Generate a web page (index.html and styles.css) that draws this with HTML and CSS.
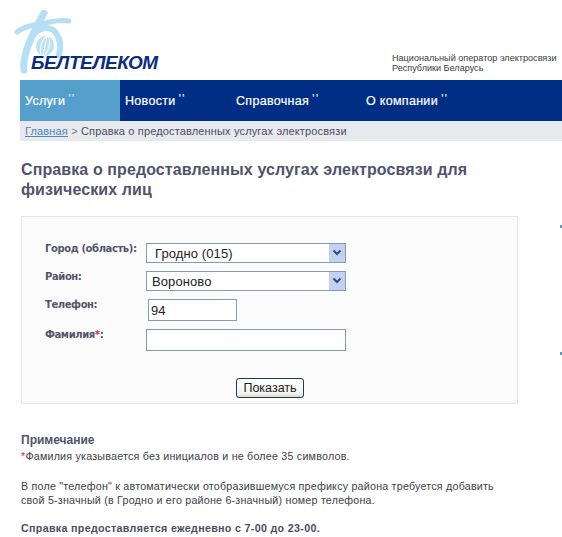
FILE: index.html
```html
<!DOCTYPE html>
<html lang="ru">
<head>
<meta charset="utf-8">
<title>Справка о предоставленных услугах электросвязи</title>
<link rel="stylesheet" href="styles.css">
</head>
<body>
<header class="top">
  <div class="logo">
    <svg class="logo-mark" width="64" height="66" viewBox="0 0 64 66" aria-hidden="true">
      <g fill="none" stroke="#b4dff4" stroke-linecap="round">
        <path d="M3 22C12 15 26 14 36 12C44 10.500 50 10 55 11" stroke-width="5"/>
        <path d="M30 3C24 14 16 28 12 42C10 50 9 55 10 60" stroke-width="7"/>
        <path d="M18 27C24 17 36 15 42 23C47 30 47 38 45 45" stroke-width="6"/>
      </g>
      <ellipse cx="31" cy="36" rx="9" ry="10" fill="#bce2f5" transform="rotate(15 31 36)"/>
      <g fill="none" stroke="#fff" stroke-width="1">
        <ellipse cx="31" cy="36" rx="4" ry="10" transform="rotate(15 31 36)"/>
        <path d="M33 26L29 46"/>
      </g>
    </svg>
    <span class="logo-text">БЕЛТЕЛЕКОМ</span>
  </div>
  <p class="tagline">Национальный оператор электросвязи<br>Республики Беларусь</p>
</header>

<nav class="nav">
  <a class="nav-item nav-active w-a" href="#">Услуги<i class="dots">''</i></a>
  <a class="nav-item w-b" href="#">Новости<i class="dots">''</i></a>
  <a class="nav-item w-c" href="#">Справочная<i class="dots">''</i></a>
  <a class="nav-item w-d" href="#">О компании<i class="dots">''</i></a>
</nav>

<div class="crumbs"><a href="#">Главная</a> <span class="sep">&gt;</span> Справка о предоставленных услугах электросвязи</div>

<div class="layout">
  <main class="main">
    <h1>Справка о предоставленных услугах электросвязи для физических лиц</h1>
    <form class="panel">
      <div class="row row-a">
        <label class="lbl">Город (область):</label>
        <div class="sel">
          <select class="sel-in indent"><option>Гродно (015)</option></select>
          <span class="sel-btn"><svg width="10" height="8" viewBox="0 0 10 8"><path d="M1.500 1.500L5 5L8.500 1.500" fill="none" stroke="#2b4a8c" stroke-width="2"/></svg></span>
        </div>
      </div>
      <div class="row row-b">
        <label class="lbl">Район:</label>
        <div class="sel">
          <select class="sel-in"><option>Вороново</option></select>
          <span class="sel-btn"><svg width="10" height="8" viewBox="0 0 10 8"><path d="M1.500 1.500L5 5L8.500 1.500" fill="none" stroke="#2b4a8c" stroke-width="2"/></svg></span>
        </div>
      </div>
      <div class="row row-c">
        <label class="lbl">Телефон:</label>
        <input class="field field-tel" type="text" value="94">
      </div>
      <div class="row row-d">
        <label class="lbl">Фамилия<span class="req">*</span>:</label>
        <input class="field field-name" type="text">
      </div>
      <div class="actions"><button class="btn" type="button">Показать</button></div>
    </form>
    <section class="notes">
      <h2>Примечание</h2>
      <p class="note-first"><span class="req">*</span>Фамилия указывается без инициалов и не более 35 символов.</p>
      <p class="note-two">В поле "телефон" к автоматически отобразившемуся префиксу района требуется добавить свой 5-значный (в Гродно и его районе 6-значный) номер телефона.</p>
      <p class="note-bold">Справка предоставляется ежедневно с 7-00 до 23-00.</p>
    </section>
  </main>
  <aside class="side"><span class="mark"></span><span class="mark"></span></aside>
</div>
</body>
</html>
```
FILE: styles.css
```css
html, body {
  margin: 0;
  padding: 0;
  height: 537px;
  overflow: hidden;
  background: #fff;
}
body {
  font-family: "Liberation Sans", Arial, sans-serif;
  color: #4a4d63;
}
.top {
  height: 80px;
  display: flex;
  justify-content: space-between;
  box-sizing: border-box;
}
.logo {
  position: relative;
  width: 170px;
}
.logo-mark {
  position: absolute;
  left: 14px;
  top: 10px;
}
.logo-text {
  position: absolute;
  left: 31px;
  top: 52px;
  font-size: 19px;
  line-height: 22px;
  font-weight: bold;
  font-style: italic;
  color: #0b2d7c;
  letter-spacing: -0.500px;
}
.tagline {
  margin: 53px 5px 0 0;
  width: 165px;
  font-size: 9.100px;
  line-height: 10px;
  color: #3a3a3a;
  white-space: nowrap;
}
.nav {
  margin-left: 20px;
  height: 41px;
  background: #002e85;
  display: flex;
}
.nav-item {
  box-sizing: border-box;
  padding: 11px 0 0 5px;
  font-size: 12.500px;
  line-height: 15px;
  font-weight: 500;
  color: #fff;
  text-decoration: none;
  letter-spacing: 0.300px;
  -webkit-text-stroke: 0.2px #fff;
}
.nav-active { background: #559fcd; }
.w-a { width: 100px; }
.w-b { width: 111px; }
.w-c { width: 130px; }
.w-d { width: 150px; }
.dots {
  font-style: normal;
  font-weight: bold;
  font-size: 11px;
  letter-spacing: 1px;
  color: #b5dcf4;
  margin-left: 3px;
  vertical-align: 3px;
  -webkit-text-stroke: 0;
}
.crumbs {
  margin-left: 20px;
  height: 20px;
  box-sizing: border-box;
  padding: 4px 0 0 5px;
  background: #e8e9ee;
  font-size: 11px;
  line-height: 13px;
  letter-spacing: 0.150px;
  color: #4a4d5a;
}
.crumbs a { color: #4a88b5; }
.sep { color: #777; }
.layout {
  display: flex;
  justify-content: space-between;
}
.main {
  width: 497px;
  margin-left: 21px;
}
h1 {
  margin: 19px 0 16px;
  font-size: 16px;
  line-height: 20px;
  font-weight: bold;
  color: #50536c;
  letter-spacing: 0.100px;
}
.panel {
  box-sizing: border-box;
  height: 188px;
  border: 1px solid #e6e6e6;
  background: #fbfbfb;
  padding: 26px 0 0 23px;
}
.row {
  display: grid;
  grid-template-columns: 101px 200px;
  align-items: start;
}
.row-a { height: 28px; }
.row-b { height: 28px; }
.row-c { height: 30px; }
.row-d { height: 49px; }
.lbl {
  font-family: "DejaVu Sans", Verdana, sans-serif;
  font-size: 10px;
  line-height: 12px;
  font-weight: bold;
  letter-spacing: -0.400px;
  color: #52556b;
  white-space: nowrap;
}
.req { color: #d81e50; }
.sel {
  position: relative;
  width: 200px;
  height: 20px;
}
.sel-in {
  appearance: none;
  -webkit-appearance: none;
  box-sizing: border-box;
  width: 200px;
  height: 20px;
  border: 1px solid #7f9db9;
  border-radius: 0;
  background: #fff;
  padding: 1px 0 0 5px;
  font-family: "Liberation Sans", Arial, sans-serif;
  font-size: 13px;
  letter-spacing: 0.100px;
  color: #222;
}
.indent { padding-left: 8px; }
.sel-btn {
  position: absolute;
  right: 1px;
  top: 1px;
  width: 16px;
  height: 18px;
  background: #c3d2ee;
  display: flex;
  align-items: center;
  justify-content: center;
}
.field {
  box-sizing: border-box;
  border: 1px solid #7f9db9;
  border-radius: 0;
  background: #fff;
  padding: 0 2px;
  font-family: "Liberation Sans", Arial, sans-serif;
  font-size: 13px;
  color: #222;
  outline: none;
}
.field-tel {
  width: 89px;
  height: 22px;
  margin-left: 2px;
}
.field-name {
  width: 200px;
  height: 22px;
}
.actions {
  padding-left: 191px;
}
.btn {
  box-sizing: border-box;
  width: 68px;
  height: 20px;
  padding: 0;
  border: 1px solid #1c3a5c;
  border-radius: 3px;
  background: linear-gradient(#ffffff, #f3f3ec 80%, #dcd8c8);
  font-family: "Liberation Sans", Arial, sans-serif;
  font-size: 12.500px;
  color: #222;
}
.notes {
  margin-top: 29px;
}
h2 {
  margin: 0;
  font-size: 12px;
  line-height: 14px;
  font-weight: bold;
  color: #50536c;
}
.notes p {
  margin: 0;
  font-size: 10.700px;
  line-height: 14px;
  letter-spacing: 0.220px;
  color: #3d3d48;
}
.notes .note-first { margin-top: 2px; }
.notes .note-two {
  margin-top: 16px;
  width: 490px;
}
.notes .note-bold {
  margin-top: 14px;
  font-weight: bold;
  letter-spacing: 0.320px;
  color: #4a4d63;
}
.side {
  width: 2px;
  padding-top: 84px;
  display: flex;
  flex-direction: column;
  gap: 124px;
}
.mark {
  display: block;
  width: 2px;
  height: 3px;
  background: #5a9cc8;
}
```
